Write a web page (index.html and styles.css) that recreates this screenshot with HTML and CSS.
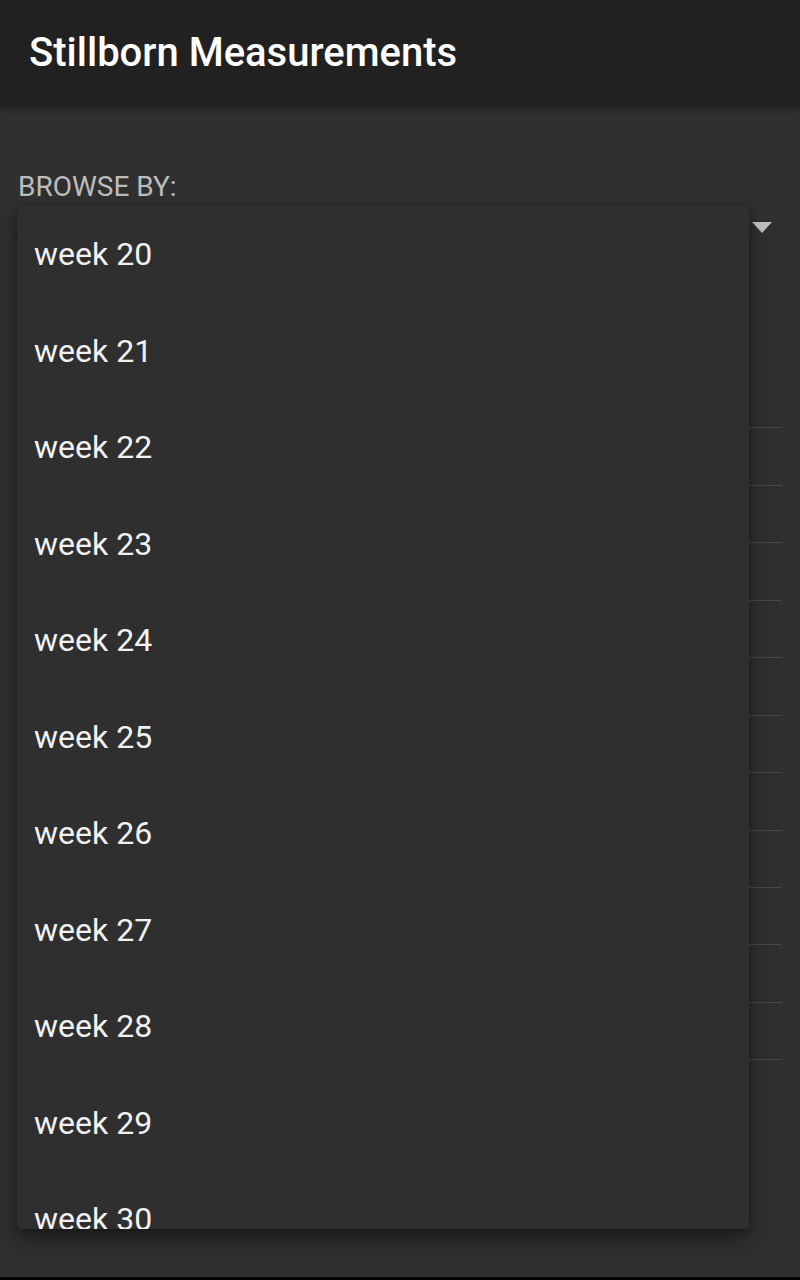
FILE: index.html
```html
<!DOCTYPE html>
<html lang="en">
<head>
    <meta charset="UTF-8">
    <meta name="viewport" content="width=device-width, initial-scale=1.0">
    <title>Stillborn Measurements</title>
    <link rel="stylesheet" href="styles.css">
</head>
<body>

<div class="screen">
    <header class="app-bar">
        <h1>Stillborn Measurements</h1>
    </header>

    <main class="content">
        <div class="browse-label">BROWSE BY:</div>
        <div class="spinner">
            <svg class="spinner-arrow" width="20" height="12" viewBox="0 0 20 12">
                <polygon points="0,0 20,0 10,11" fill="#c4c4c4"/>
            </svg>
        </div>
        <ul class="results">
            <li></li><li></li><li></li><li></li><li></li><li></li>
            <li></li><li></li><li></li><li></li><li></li><li></li>
        </ul>

        <ul class="dropdown">
            <li>week 20</li>
            <li>week 21</li>
            <li>week 22</li>
            <li>week 23</li>
            <li>week 24</li>
            <li>week 25</li>
            <li>week 26</li>
            <li>week 27</li>
            <li>week 28</li>
            <li>week 29</li>
            <li>week 30</li>
        </ul>
    </main>
    <div class="nav-strip"></div>
</div>

</body>
</html>
```

FILE: styles.css
```css
html, body {
    margin: 0;
    padding: 0;
    background-color: #000;
}

body {
    font-family: Roboto, "Noto Sans", sans-serif;
}

.screen {
    width: 800px;
    height: 1280px;
    display: flex;
    flex-direction: column;
    overflow: hidden;
}

.app-bar {
    height: 107px;
    flex: none;
    background-color: #212121;
    position: relative;
    z-index: 2;
    box-shadow: 0 2px 6px rgba(0, 0, 0, 0.35);
}

.app-bar h1 {
    margin: 0;
    padding-left: 29px;
    font-size: 40px;
    font-weight: 500;
    line-height: 106px;
    color: #fff;
}

.content {
    flex: 1;
    position: relative;
    background-color: #303030;
    padding: 0 18px;
    overflow: hidden;
}

.browse-label {
    margin-top: 64px;
    font-size: 28px;
    line-height: 32px;
    color: #bdbdbd;
}

.spinner {
    height: 40px;
    display: flex;
    justify-content: flex-end;
    align-items: flex-start;
    padding-right: 10px;
}

.spinner-arrow {
    margin-top: 19px;
}

.results {
    list-style: none;
    margin: 128px 0 0;
    padding: 0;
}

.results li {
    height: 56.45px;
    border-bottom: 1px solid #4a4a4a;
}

.dropdown {
    position: absolute;
    left: 17px;
    top: 99px;
    width: 732px;
    height: 1023px;
    margin: 0;
    padding: 0;
    list-style: none;
    background-color: #2f2f2f;
    border-radius: 4px;
    overflow: hidden;
    box-shadow: 0 12px 28px rgba(0, 0, 0, 0.35), 0 3px 8px rgba(0, 0, 0, 0.3);
}

.dropdown li {
    height: 96.5px;
    padding-left: 17px;
    font-size: 32px;
    line-height: 96.5px;
    color: #f2f2f2;
}

.nav-strip {
    height: 3px;
    flex: none;
    background-color: #000;
}
```
